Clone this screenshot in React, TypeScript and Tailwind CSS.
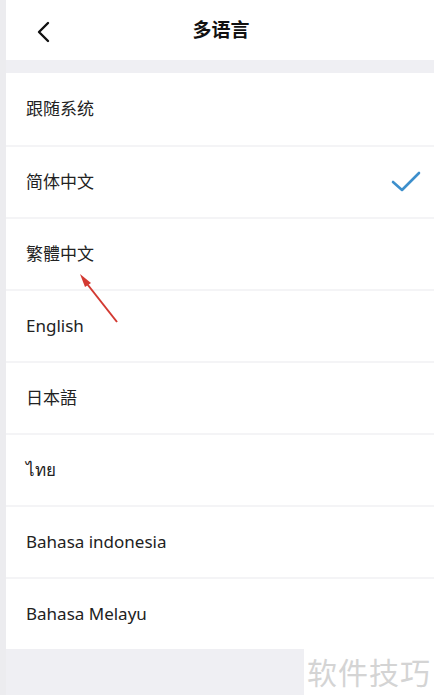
const languages = [
  '跟随系统',
  '简体中文',
  '繁體中文',
  'English',
  '日本語',
  'ไทย',
  'Bahasa indonesia',
  'Bahasa Melayu',
];

function Check() {
  return (
    <svg width="32" height="26" viewBox="0 0 32 26" fill="none">
      <path d="M3 13 L12 21 L29 4" stroke="#3d8fcc" strokeWidth="2.6" strokeLinecap="round" strokeLinejoin="round" />
    </svg>
  );
}

export default function App() {
  const selected = '简体中文';

  return (
    <div
      className="relative w-[434px] h-[695px] overflow-hidden bg-[#efeff3] flex"
      style={{ fontFamily: '"Noto Sans", "Noto Sans CJK SC", sans-serif' }}
    >
      <div className="w-[6px] shrink-0 bg-[#ececef]" />
      <div className="flex-1 flex flex-col">
        <header className="h-[60px] bg-white relative flex items-center justify-center">
          <svg className="absolute left-[27px] top-[20px]" width="24" height="24" viewBox="0 0 24 24" fill="none">
            <path d="M15 3 L6 12 L15 21" stroke="#111" strokeWidth="2.4" strokeLinecap="round" strokeLinejoin="round" />
          </svg>
          <h1 className="text-[19px] font-bold text-[#111] ml-[2px]">多语言</h1>
        </header>
        <div className="h-[13px]" />
        <ul className="bg-white">
          {languages.map((lang, i) => (
            <li
              key={lang}
              className={`h-[72px] flex items-center justify-between pl-[20px] pr-[12px] ${
                i > 0 ? 'border-t-2 border-[#f4f4f6]' : ''
              }`}
            >
              <span className="text-[17px] text-[#222]">{lang}</span>
              {lang === selected && <Check />}
            </li>
          ))}
        </ul>
        <div className="flex-1 flex justify-end">
          <div className="w-[130px] bg-white flex items-center justify-center">
            <span className="text-[30px] text-[#d4d4d4] tracking-[1px]">软件技巧</span>
          </div>
        </div>
      </div>
      <svg className="absolute left-0 top-0 pointer-events-none" width="434" height="695">
        <line x1="117" y1="322" x2="84" y2="280" stroke="#d33a32" strokeWidth="2" />
        <path d="M80 274 L91 283 L85 287 Z" fill="#d33a32" />
      </svg>
    </div>
  );
}
